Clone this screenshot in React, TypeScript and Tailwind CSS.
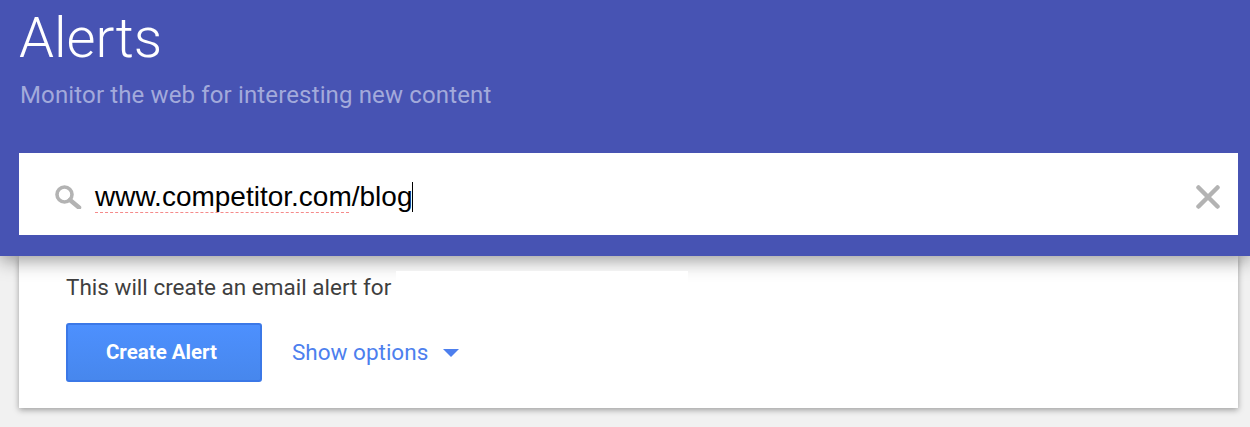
export default function App() {
  return (
    <div className="w-[1250px] h-[427px] overflow-hidden flex flex-col bg-[#f1f1f1] font-['Roboto',sans-serif]">
      {/* Blue header */}
      <header className="relative z-10 h-[256px] shrink-0 bg-[#4753b3] pl-[19px] pr-[12px] shadow-[0_4px_18px_rgba(0,0,0,0.42)]">
        <h1 className="pt-[4px] text-[56px] leading-[68px] font-light text-white">Alerts</h1>
        <p className="mt-[7px] pl-px text-[24px] leading-[32px] tracking-[0.14px] text-[#a3aadb]">Monitor the web for interesting new content</p>

        {/* Search box */}
        <div className="mt-[42px] h-[82px] flex items-center bg-white">
          <svg viewBox="0 0 28 24" className="ml-[35px] mt-[5px] w-[28px] h-[24px]" fill="none" stroke="#b3b3b3">
            <circle cx="10.5" cy="9.5" r="7.5" strokeWidth="3.6" />
            <path d="M16 15l9 7.5" strokeWidth="4.5" strokeLinecap="round" />
          </svg>
          <div className="relative ml-[13px] mt-[6px] flex items-center">
            <span className="text-[28px] leading-[36px] text-black font-['Liberation_Sans',sans-serif]">www.competitor.com/blog</span>
            <span className="w-px h-[30px] bg-black" />
            <span className="absolute left-0 top-[33px] w-[254px] border-t border-dashed border-[#f58a8a]" />
          </div>
          <svg viewBox="0 0 24 24" className="ml-auto mr-[18px] mt-[5px] w-[24px] h-[24px]" fill="none" stroke="#b3b3b3" strokeWidth="4.5" strokeLinecap="round">
            <path d="M2.5 2.5l19 19M21.5 2.5l-19 19" />
          </svg>
        </div>
      </header>

      {/* Card */}
      <main className="ml-[19px] mr-[12px] h-[152px] bg-white shadow-[0_2px_6px_rgba(0,0,0,0.35)] pl-[47px]">
        <div className="mt-[15px] h-[32px] flex items-start">
          <span className="text-[22.5px] leading-[32px] text-[#3f3f3f]">This will create an email alert for</span>
          <span className="relative z-20 ml-[5px] w-[292px] h-[15px] bg-white" />
        </div>
        <div className="mt-[20px] flex items-center">
          <button className="w-[196px] h-[59px] pr-[5px] rounded-[3px] border-2 border-[#3b78e7] bg-gradient-to-b from-[#4d90fe] to-[#4787ed] text-[20.5px] font-bold text-white">Create Alert</button>
          <span className="ml-[30px] text-[22.5px] text-[#4d7fee]">Show options</span>
          <span className="ml-[15px] w-0 h-0 border-x-[8px] border-x-transparent border-t-[8px] border-t-[#4d7fee]" />
        </div>
      </main>
    </div>
  );
}
